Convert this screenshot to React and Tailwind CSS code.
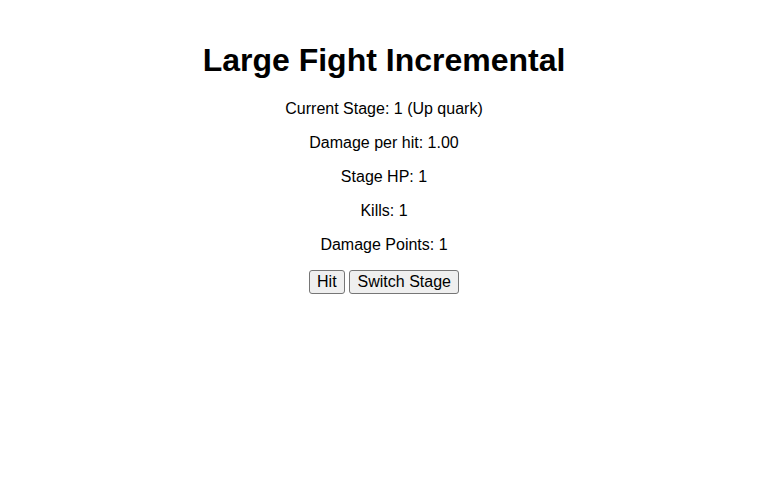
export default function App() {
  return (
    <div
      className="min-h-screen bg-white pt-[20px] text-center text-black"
      style={{ fontFamily: '"Liberation Sans", Arial, sans-serif' }}
    >
      <h1 className="mt-[22px] mb-[21px] text-[32px] font-bold leading-[37px]">Large Fight Incremental</h1>
      <p className="my-4 text-base leading-[18px]">Current Stage: 1 (Up quark)</p>
      <p className="my-4 text-base leading-[18px]">Damage per hit: 1.00</p>
      <p className="my-4 text-base leading-[18px]">Stage HP: 1</p>
      <p className="my-4 text-base leading-[18px]">Kills: 1</p>
      <p className="my-4 text-base leading-[18px]">Damage Points: 1</p>
      <div className="flex justify-center gap-[4px]">
        <button className="h-[24px] rounded-[3px] border border-[#767676] bg-[#efefef] px-[7.5px] text-base leading-[18px]">
          Hit
        </button>
        <button className="h-[24px] rounded-[3px] border border-[#767676] bg-[#efefef] px-[7.5px] text-base leading-[18px]">
          Switch Stage
        </button>
      </div>
    </div>
  );
}
